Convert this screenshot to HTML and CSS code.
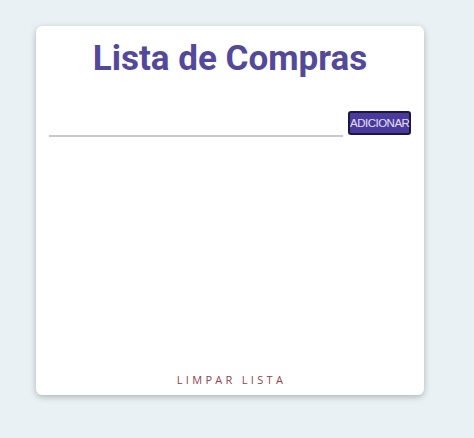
FILE: index.html
```html
<!DOCTYPE html>
<html>
<head>
<meta charset="utf-8">
<link rel="stylesheet" href="styles.css">
</head>
<body>
<main class="card">
  <h1 class="title">Lista de Compras</h1>
  <form class="add-form">
    <input class="item-input" type="text">
    <button class="add-btn" type="button">ADICIONAR</button>
  </form>
  <ul class="list"></ul>
  <button class="clear-btn" type="button">LIMPAR LISTA</button>
</main>
</body>
</html>
```
FILE: styles.css
```css
html, body {
  margin: 0;
  padding: 0;
}
body {
  background: #e9f1f4;
  width: 474px;
  height: 438px;
  padding: 26px 0 0 36px;
  box-sizing: border-box;
  font-family: "Liberation Sans", Arial, sans-serif;
}
.card {
  width: 388px;
  height: 369px;
  background: #fff;
  border-radius: 6px;
  box-shadow: 0 2px 6px rgba(0,0,0,0.25);
  box-sizing: border-box;
  padding: 11px 13px 8px 13px;
  display: flex;
  flex-direction: column;
}
.title {
  margin: 0;
  font-family: Roboto, sans-serif;
  font-weight: 700;
  font-size: 35px;
  line-height: 44px;
  color: #54489a;
  text-align: center;
}
.add-form {
  display: flex;
  align-items: flex-end;
  gap: 5px;
  margin-top: 30px;
}
.item-input {
  width: 294px;
  height: 24px;
  border: none;
  border-bottom: 2px solid #c9c9c9;
  outline: none;
  padding: 0;
  margin-bottom: -1px;
}
.add-btn {
  width: 63px;
  height: 24px;
  padding: 0;
  background: #4a3a9e;
  color: #e4e0f6;
  border: 2px solid #1c1640;
  border-radius: 3px;
  font-family: "Liberation Sans", Arial, sans-serif;
  font-size: 11.5px;
  letter-spacing: -0.5px;
  margin-bottom: 1px;
  white-space: nowrap;
}
.list {
  flex: 1;
  margin: 0;
  padding: 0;
  list-style: none;
}
.clear-btn {
  align-self: center;
  background: none;
  border: none;
  font-family: "Open Sans", sans-serif;
  font-size: 11px;
  font-weight: 400;
  line-height: 14px;
  letter-spacing: 3.3px;
  color: #8e4450;
  padding: 0 0 0 3px;
  margin-bottom: 0;
}
```
